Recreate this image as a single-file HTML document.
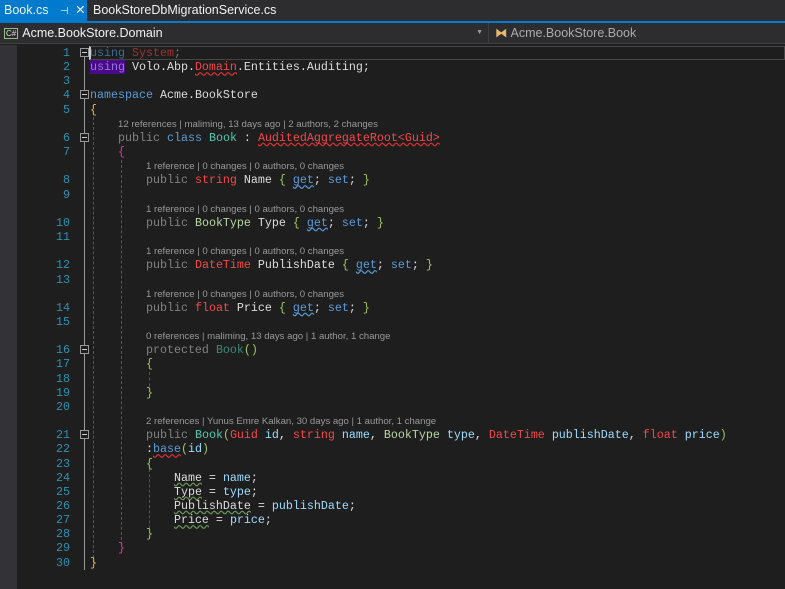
<!DOCTYPE html>
<html><head><meta charset="utf-8"><style>
*{margin:0;padding:0;box-sizing:border-box}
body{width:785px;height:589px;background:#1e1e1e;overflow:hidden;position:relative;font-family:"Liberation Mono",monospace;font-size:11.67px;color:#dcdcdc}
#tabs{position:absolute;left:0;top:0;width:785px;height:21px;background:#2d2d30}
.tab{position:absolute;top:0;height:21px;line-height:21px;font-family:"Liberation Sans",sans-serif;font-size:12.5px;color:#f1f1f1}
#blue{position:absolute;left:0;top:21px;width:785px;height:2px;background:#007acc}
#nav{position:absolute;left:0;top:23px;width:785px;height:21px;background:#2d2d30;border-bottom:1px solid #3f3f46}
.dd{position:absolute;top:0;height:21px;line-height:20px;border-right:1px solid #3f3f46;font-family:"Liberation Sans",sans-serif;font-size:12.5px;color:#f1f1f1}
#strip{position:absolute;left:0;top:45px;width:17px;height:544px;background:#333337}
#rows{position:absolute;left:0;top:46px;width:785px}
.r{height:14.17px;line-height:14.17px;position:relative;white-space:pre}
.n{position:absolute;left:0;width:70px;text-align:right;color:#2b91af}
.c{position:absolute;left:90px}
.lens{position:absolute;font-family:"Liberation Sans",sans-serif;font-size:9.6px;color:#999;top:1px}
.k{color:#569cd6}.g{color:#808080}.t{color:#4ec9b0}.e{color:#f44747}.bt{color:#b8d7a3}.p{color:#9cdcfe}
.gb{color:#9fc45a}.ob{color:#e8b63b}.mb{color:#da3aa0}
.sq{text-decoration:underline wavy #e03030;text-decoration-skip-ink:none}
.sg{text-decoration:underline wavy #6a9955;text-decoration-skip-ink:none}
.sb{text-decoration:underline wavy #569cd6;text-decoration-skip-ink:none}
.box{position:absolute;left:80px;width:9px;height:9px;border:1px solid #999;top:2px;background:#1e1e1e}
.box:after{content:"";position:absolute;left:1px;top:3px;width:5px;height:1px;background:#ccc}
.vg{position:absolute;border-left:1px dashed #555;width:0}
.ol{position:absolute;left:84px;width:0;border-left:1px solid #999}
</style></head><body>
<div id="tabs">
<div class="tab" style="left:0;width:87px;background:#007acc;padding-left:4px">Book.cs <span style="margin-left:8px;font-size:10px">⊣</span> <span style="margin-left:3px">✕</span></div>
<div class="tab" style="left:93px">BookStoreDbMigrationService.cs</div>
</div>
<div id="blue"></div>
<div id="nav">
<div class="dd" style="left:0;width:489px"><span style="display:inline-block;margin:0 4px 0 4px;border:1px solid #8dc27e;color:#ddd;font-size:8px;line-height:9px;padding:0 1px;vertical-align:1px">C#</span>Acme.BookStore.Domain<span style="position:absolute;right:5px;top:0;font-size:7px;color:#999">▼</span></div>
<div class="dd" style="left:491px;width:294px;border:none;color:#aaa"><span style="color:#e8b96b;margin:0 3px 0 4px">⧓</span>Acme.BookStore.Book</div>
</div>
<div id="strip"></div>

<div class="ol" style="top:53px;height:55px"></div>
<div class="ol" style="top:108px;height:462px"></div>
<div class="vg" style="left:93px;top:117px;height:446px"></div>
<div class="vg" style="left:121px;top:160px;height:385px"></div>
<div class="vg" style="left:149px;top:372px;height:20px"></div>
<div class="vg" style="left:149px;top:469px;height:70px"></div>

<div id="rows">
<div class="r" style="border:1px solid #464646;border-left:2px solid #ccc;margin-left:89px;position:absolute;width:696px;top:0;height:14px"></div>
<div class="r"><span class="n">1</span><span class="box"></span><span class="c"><span style="color:#3f6a94">using</span> <span style="color:#9a3434">System</span><span style="color:#777">;</span></span></div>
<div class="r"><span class="n">2</span><span class="c"><span style="background:#4b0a8a;color:#8f7bd6">using</span> Volo.Abp.<span class="e sq">Domain</span>.Entities.Auditing;</span></div>
<div class="r"><span class="n">3</span></div>
<div class="r"><span class="n">4</span><span class="box"></span><span class="c"><span class="k">namespace</span> Acme.BookStore</span></div>
<div class="r"><span class="n">5</span><span class="c"><span class="ob">{</span></span></div>
<div class="r"><span class="lens" style="left:118px">12 references | maliming, 13 days ago | 2 authors, 2 changes</span></div>
<div class="r"><span class="n">6</span><span class="box"></span><span class="c">    <span class="g">public</span> <span class="k">class</span> <span class="t">Book</span> : <span class="e sq">AuditedAggregateRoot&lt;Guid&gt;</span></span></div>
<div class="r"><span class="n">7</span><span class="c">    <span class="mb">{</span></span></div>
<div class="r"><span class="lens" style="left:146px">1 reference | 0 changes | 0 authors, 0 changes</span></div>
<div class="r"><span class="n">8</span><span class="c">        <span class="g">public</span> <span class="e">string</span> Name <span class="gb">{</span> <span class="k sb">get</span>; <span class="k">set</span>; <span class="gb">}</span></span></div>
<div class="r"><span class="n">9</span></div>
<div class="r"><span class="lens" style="left:146px">1 reference | 0 changes | 0 authors, 0 changes</span></div>
<div class="r"><span class="n">10</span><span class="c">        <span class="g">public</span> <span class="bt">BookType</span> Type <span class="gb">{</span> <span class="k sb">get</span>; <span class="k">set</span>; <span class="gb">}</span></span></div>
<div class="r"><span class="n">11</span></div>
<div class="r"><span class="lens" style="left:146px">1 reference | 0 changes | 0 authors, 0 changes</span></div>
<div class="r"><span class="n">12</span><span class="c">        <span class="g">public</span> <span class="e">DateTime</span> PublishDate <span class="gb">{</span> <span class="k sb">get</span>; <span class="k">set</span>; <span class="gb">}</span></span></div>
<div class="r"><span class="n">13</span></div>
<div class="r"><span class="lens" style="left:146px">1 reference | 0 changes | 0 authors, 0 changes</span></div>
<div class="r"><span class="n">14</span><span class="c">        <span class="g">public</span> <span class="e">float</span> Price <span class="gb">{</span> <span class="k sb">get</span>; <span class="k">set</span>; <span class="gb">}</span></span></div>
<div class="r"><span class="n">15</span></div>
<div class="r"><span class="lens" style="left:146px">0 references | maliming, 13 days ago | 1 author, 1 change</span></div>
<div class="r"><span class="n">16</span><span class="box"></span><span class="c">        <span class="g">protected</span> <span style="color:#3a8a78">Book</span><span class="gb">()</span></span></div>
<div class="r"><span class="n">17</span><span class="c">        <span class="gb">{</span></span></div>
<div class="r"><span class="n">18</span></div>
<div class="r"><span class="n">19</span><span class="c">        <span class="gb">}</span></span></div>
<div class="r"><span class="n">20</span></div>
<div class="r"><span class="lens" style="left:146px">2 references | Yunus Emre Kalkan, 30 days ago | 1 author, 1 change</span></div>
<div class="r"><span class="n">21</span><span class="box"></span><span class="c">        <span class="g">public</span> <span class="t">Book</span><span class="gb">(</span><span class="e">Guid</span> <span class="p">id</span>, <span class="e">string</span> <span class="p">name</span>, <span class="bt">BookType</span> <span class="p">type</span>, <span class="e">DateTime</span> <span class="p">publishDate</span>, <span class="e">float</span> <span class="p">price</span><span class="gb">)</span></span></div>
<div class="r"><span class="n">22</span><span class="c">        :<span class="k sq">base</span><span class="gb">(</span><span class="p">id</span><span class="gb">)</span></span></div>
<div class="r"><span class="n">23</span><span class="c">        <span class="gb">{</span></span></div>
<div class="r"><span class="n">24</span><span class="c">            <span class="sg">Name</span> = <span class="p">name</span>;</span></div>
<div class="r"><span class="n">25</span><span class="c">            <span class="sg">Type</span> = <span class="p">type</span>;</span></div>
<div class="r"><span class="n">26</span><span class="c">            <span class="sg">PublishDate</span> = <span class="p">publishDate</span>;</span></div>
<div class="r"><span class="n">27</span><span class="c">            <span class="sg">Price</span> = <span class="p">price</span>;</span></div>
<div class="r"><span class="n">28</span><span class="c">        <span class="gb">}</span></span></div>
<div class="r"><span class="n">29</span><span class="c">    <span class="mb">}</span></span></div>
<div class="r"><span class="n">30</span><span class="c"><span class="ob">}</span></span></div>
</div>
</body></html>
